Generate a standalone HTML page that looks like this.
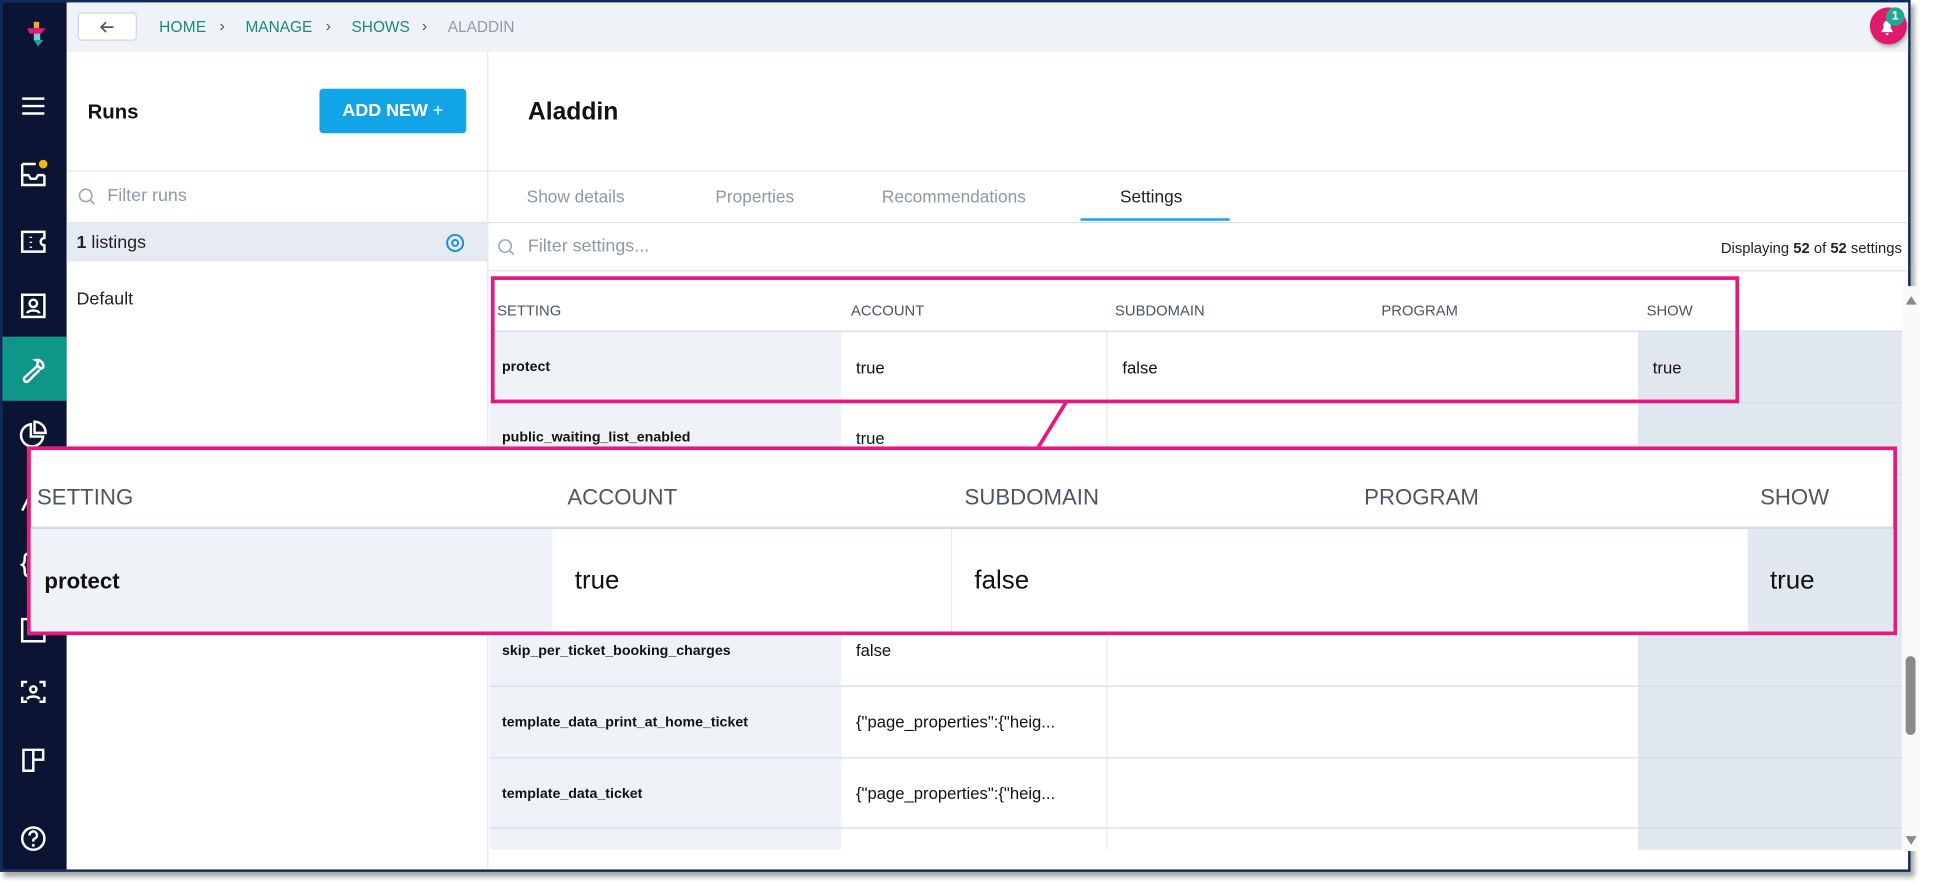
<!DOCTYPE html>
<html><head><meta charset="utf-8">
<style>
html,body{margin:0;padding:0;width:1934px;height:883px;overflow:hidden;background:#fff;}
#w{position:absolute;left:0;top:0;width:1568px;height:716px;transform:scale(1.23342,1.23324);transform-origin:0 0;font-family:"Liberation Sans",sans-serif;color:#111;}
.a{position:absolute;}
.frame{left:0;top:0;width:1549px;height:707px;border:2px solid #0f2a5c;box-sizing:border-box;box-shadow:3px 4px 4px rgba(0,0,0,.35);background:#fff;}
.side{left:2px;top:2px;width:52px;height:703px;background:#0b1533;}
.ic{position:absolute;left:14px;width:26px;height:26px;}
.t{white-space:nowrap;}
.hd{font-size:12px;color:#4b5563;}
.cell{font-size:12px;}
.hl{border:3px solid #e8177f;box-sizing:border-box;}
</style></head><body><div id="w">
<div class="a frame"></div>
<div class="a" style="left:54px;top:2px;width:1493px;height:40px;background:#eff3f8"></div>
<div class="a" style="left:63px;top:10px;width:48px;height:23px;background:#fff;border:1px solid #cfd6e0;border-radius:3px;box-sizing:border-box"></div>
<svg class="a" style="left:79px;top:14px" width="16" height="16" viewBox="0 0 16 16"><path d="M13 8H3M7 4L3 8l4 4" stroke="#555" stroke-width="1.4" fill="none"/></svg>
<div class="a t" style="left:129px;top:15px;font-size:12.5px;color:#158a7c;letter-spacing:.2px">HOME</div>
<div class="a t" style="left:178px;top:13px;font-size:13px;color:#555">›</div>
<div class="a t" style="left:199px;top:15px;font-size:12.5px;color:#158a7c">MANAGE</div>
<div class="a t" style="left:264px;top:13px;font-size:13px;color:#555">›</div>
<div class="a t" style="left:285px;top:15px;font-size:12.5px;color:#158a7c">SHOWS</div>
<div class="a t" style="left:342px;top:13px;font-size:13px;color:#555">›</div>
<div class="a t" style="left:363px;top:15px;font-size:12.5px;color:#8f9aa8">ALADDIN</div>
<div class="a" style="left:1516px;top:6px;width:30px;height:30px;border-radius:50%;background:#e0196f;box-shadow:1px 2px 3px rgba(0,0,0,.3)"></div>
<svg class="a" style="left:1522px;top:14px" width="16" height="16" viewBox="0 0 16 16"><path d="M3 12h10l-2-3V6a3 3 0 0 0-6 0v3z M7 13h2v1.5h-2z" fill="#fff"/></svg>
<div class="a" style="left:1529px;top:6px;width:15px;height:15px;border-radius:50%;background:#22a892;color:#fff;font-size:10px;font-weight:bold;text-align:center;line-height:15px">1</div>
<div class="a side"></div>
<svg class="ic" style="top:16px;left:17px" width="20" height="30" viewBox="0 0 20 30"><path d="M7 2h5v6H7z" fill="#f5a623"/><path d="M1 8h6v5H3z" fill="#e8177f"/><path d="M7 8h11l-4 5H7z" fill="#e8177f"/><path d="M7 13h6v6H7z" fill="#7ccbd6"/><path d="M7 19h9l-5 6z" fill="#1aa58f"/></svg>
<svg class="ic" style="top:73px" viewBox="0 0 26 26"><path d="M4 7h18M4 13h18M4 19h18" stroke="#fff" stroke-width="2"/></svg>
<svg class="ic" style="top:128px" viewBox="0 0 26 26"><path d="M4 5h11M4 5v17h18V14M4 14h5l2 3h4l2-3h5" stroke="#fff" stroke-width="2" fill="none"/><circle cx="21" cy="5" r="3.5" fill="#f5b50f"/></svg>
<svg class="ic" style="top:183px" viewBox="0 0 26 26"><path d="M4 5h18v5a3 3 0 0 0 0 6v5H4z" stroke="#fff" stroke-width="2" fill="none"/><path d="M11 9v1M11 13v1M11 17v1" stroke="#fff" stroke-width="2"/></svg>
<svg class="ic" style="top:235px" viewBox="0 0 26 26"><rect x="4" y="4" width="18" height="18" stroke="#fff" stroke-width="2" fill="none"/><circle cx="13" cy="11" r="3" stroke="#fff" stroke-width="2" fill="none"/><path d="M8 19c1-3 9-3 10 0" stroke="#fff" stroke-width="2" fill="none"/></svg>
<div class="a" style="left:2px;top:273px;width:52px;height:52px;background:#0e9688"></div>
<svg class="ic" style="top:287px" viewBox="0 0 26 26"><path d="M15 5a5 5 0 0 1 6 6l-2 1-3-3 1-3zM16 10L6 19a2 2 0 1 0 3 3l9-9" stroke="#fff" stroke-width="2" fill="none"/></svg>
<svg class="ic" style="top:339px" viewBox="0 0 26 26"><path d="M11 5a9 9 0 1 0 10 10H11z" stroke="#fff" stroke-width="2" fill="none"/><path d="M14 3a9 9 0 0 1 9 9h-9z" stroke="#fff" stroke-width="2" fill="none"/></svg>
<svg class="ic" style="top:392px" viewBox="0 0 26 26"><path d="M13 4L4 22M13 4l9 18" stroke="#fff" stroke-width="2" fill="none"/></svg>
<svg class="ic" style="top:445px" viewBox="0 0 26 26"><path d="M9 4c-3 0-3 2-3 5s-2 4-2 4 2 1 2 4 0 5 3 5M17 4c3 0 3 2 3 5s2 4 2 4-2 1-2 4 0 5-3 5" stroke="#fff" stroke-width="2" fill="none"/></svg>
<svg class="ic" style="top:498px" viewBox="0 0 26 26"><rect x="4" y="4" width="18" height="18" stroke="#fff" stroke-width="2" fill="none"/></svg>
<svg class="ic" style="top:548px" viewBox="0 0 26 26"><path d="M4 9V5h4M18 5h4v4M4 17v4h4M18 21h4v-4" stroke="#fff" stroke-width="2" fill="none"/><circle cx="13" cy="11" r="2.5" stroke="#fff" stroke-width="2" fill="none"/><path d="M8 19c1-3 9-3 10 0" stroke="#fff" stroke-width="2" fill="none"/></svg>
<svg class="ic" style="top:603px" viewBox="0 0 26 26"><path d="M5 5h16v8h-8v9H5zM13 5v8" stroke="#fff" stroke-width="2" fill="none"/></svg>
<svg class="ic" style="top:667px" viewBox="0 0 26 26"><circle cx="13" cy="13" r="9" stroke="#fff" stroke-width="2" fill="none"/><path d="M10 10.5a3 3 0 1 1 4 2.5c-1 .5-1 1-1 2.5" stroke="#fff" stroke-width="2" fill="none"/><circle cx="13" cy="18.5" r="1.2" fill="#fff"/></svg>
<div class="a t" style="left:71px;top:82px;font-size:16.5px;font-weight:bold;color:#111">Runs</div>
<div class="a t" style="left:259px;top:72px;width:119px;height:36px;background:#12a5e6;border-radius:3px;color:#fff;font-size:14.5px;font-weight:bold;line-height:36px;text-align:center">ADD NEW <span style="font-weight:normal">+</span></div>
<div class="a" style="left:54px;top:138px;width:1493px;height:1px;background:#e3e7ed"></div>
<svg class="a" style="left:63px;top:152px" width="15" height="15" viewBox="0 0 15 15"><circle cx="6.5" cy="6.5" r="5" stroke="#9aa5b3" stroke-width="1.3" fill="none"/><path d="M10 10l3.5 3.5" stroke="#9aa5b3" stroke-width="1.3"/></svg>
<div class="a t" style="left:87px;top:151px;font-size:14.5px;color:#8e98a6">Filter runs</div>
<div class="a" style="left:54px;top:180px;width:341px;height:32px;background:#e6ebf3;border-top:1px solid #dde3eb;box-sizing:border-box"></div>
<div class="a t" style="left:62px;top:189px;font-size:14.5px;color:#222"><b>1</b> listings</div>
<svg class="a" style="left:361px;top:189px" width="16" height="16" viewBox="0 0 16 16"><circle cx="8" cy="8" r="6.5" stroke="#1f8fd0" stroke-width="1.6" fill="none"/><circle cx="8" cy="8" r="2.4" stroke="#1f8fd0" stroke-width="1.6" fill="none"/></svg>
<div class="a t" style="left:62px;top:235px;font-size:14.5px;color:#222">Default</div>
<div class="a" style="left:395px;top:42px;width:1px;height:663px;background:#e3e7ed"></div>
<div class="a t" style="left:428px;top:80px;font-size:20px;font-weight:bold;color:#111">Aladdin</div>
<div class="a t" style="left:427px;top:151px;font-size:14px;color:#8e98a6">Show details</div>
<div class="a t" style="left:580px;top:151px;font-size:14px;color:#8e98a6">Properties</div>
<div class="a t" style="left:715px;top:151px;font-size:14px;color:#8e98a6">Recommendations</div>
<div class="a t" style="left:908px;top:151px;font-size:14px;color:#222">Settings</div>
<div class="a" style="left:876px;top:177px;width:121px;height:2px;background:#12a5e6"></div>
<div class="a" style="left:396px;top:180px;width:1151px;height:1px;background:#dfe4ea"></div>
<svg class="a" style="left:403px;top:193px" width="15" height="15" viewBox="0 0 15 15"><circle cx="6.5" cy="6.5" r="5" stroke="#9aa5b3" stroke-width="1.3" fill="none"/><path d="M10 10l3.5 3.5" stroke="#9aa5b3" stroke-width="1.3"/></svg>
<div class="a t" style="left:428px;top:192px;font-size:14.5px;color:#8e98a6">Filter settings...</div>
<div class="a t" style="right:26px;top:194px;font-size:12px;color:#222">Displaying <b>52</b> of <b>52</b> settings</div>
<div class="a" style="left:396px;top:219px;width:1151px;height:1px;background:#dfe4ea"></div>
<div class="a" style="left:1328px;top:268px;width:214px;height:421px;background:#e1e7ef"></div>
<div class="a" style="left:397px;top:268px;width:285px;height:421px;background:#eff3f8"></div>
<div class="a" style="left:897px;top:268px;width:1px;height:421px;background:#e6eaf0"></div>
<div class="a" style="left:397px;top:268px;width:1145px;height:1px;background:#d4dbe5"></div>
<div class="a" style="left:397px;top:326px;width:1145px;height:1px;background:#d4dbe5"></div>
<div class="a" style="left:397px;top:384px;width:1145px;height:1px;background:#d4dbe5"></div>
<div class="a" style="left:397px;top:556px;width:1145px;height:1px;background:#d4dbe5"></div>
<div class="a" style="left:397px;top:614px;width:1145px;height:1px;background:#d4dbe5"></div>
<div class="a" style="left:397px;top:671px;width:1145px;height:1px;background:#d4dbe5"></div>
<div class="a t hd" style="left:403px;top:245px">SETTING</div>
<div class="a t hd" style="left:690px;top:245px">ACCOUNT</div>
<div class="a t hd" style="left:904px;top:245px">SUBDOMAIN</div>
<div class="a t hd" style="left:1120px;top:245px">PROGRAM</div>
<div class="a t hd" style="left:1335px;top:245px">SHOW</div>
<div class="a t" style="left:407px;top:292px;font-size:11.5px;font-weight:bold">protect</div>
<div class="a t cell" style="left:694px;top:291px;font-size:13.5px">true</div>
<div class="a t cell" style="left:910px;top:291px;font-size:13.5px">false</div>
<div class="a t cell" style="left:1340px;top:291px;font-size:13.5px">true</div>
<div class="a t" style="left:407px;top:349px;font-size:11.5px;font-weight:bold">public_waiting_list_enabled</div>
<div class="a t cell" style="left:694px;top:348px;font-size:13.5px">true</div>
<div class="a t" style="left:407px;top:522px;font-size:11.5px;font-weight:bold">skip_per_ticket_booking_charges</div>
<div class="a t cell" style="left:694px;top:520px;font-size:13.5px">false</div>
<div class="a t" style="left:407px;top:580px;font-size:11.5px;font-weight:bold">template_data_print_at_home_ticket</div>
<div class="a t cell" style="left:694px;top:578px;font-size:13.5px">{"page_properties":{"heig...</div>
<div class="a t" style="left:407px;top:638px;font-size:11.5px;font-weight:bold">template_data_ticket</div>
<div class="a t cell" style="left:694px;top:636px;font-size:13.5px">{"page_properties":{"heig...</div>
<div class="a" style="left:1542px;top:232px;width:14px;height:458px;background:#fafafa"></div>
<svg class="a" style="left:1544px;top:238px" width="11" height="10"><path d="M1 9L5.5 2 10 9z" fill="#8a8a8a"/></svg>
<div class="a" style="left:1545px;top:532px;width:8px;height:64px;border-radius:4px;background:#8a8a8a"></div>
<svg class="a" style="left:1544px;top:677px" width="11" height="10"><path d="M1 1L5.5 8 10 1z" fill="#8a8a8a"/></svg>
<div class="a hl" style="left:398px;top:224px;width:1012px;height:103px"></div>
<svg class="a" style="left:830px;top:322px" width="40" height="45"><path d="M35 3L11 42" stroke="#e8177f" stroke-width="3"/></svg>
<div class="a hl" style="left:22px;top:362px;width:1516px;height:153px;background:#fff"></div>
<div class="a" style="left:25px;top:428px;width:1510px;height:84px;background:#fff"></div>
<div class="a" style="left:25px;top:428px;width:423px;height:84px;background:#eff3f8"></div>
<div class="a" style="left:1417px;top:428px;width:118px;height:84px;background:#e1e7ef"></div>
<div class="a" style="left:771px;top:428px;width:1px;height:84px;background:#e6eaf0"></div>
<div class="a" style="left:25px;top:427px;width:1510px;height:2px;background:#d4dbe5"></div>
<div class="a t" style="left:30px;top:393px;font-size:18px;color:#4b5563">SETTING</div>
<div class="a t" style="left:460px;top:393px;font-size:18px;color:#4b5563">ACCOUNT</div>
<div class="a t" style="left:782px;top:393px;font-size:18px;color:#4b5563">SUBDOMAIN</div>
<div class="a t" style="left:1106px;top:393px;font-size:18px;color:#4b5563">PROGRAM</div>
<div class="a t" style="left:1427px;top:393px;font-size:18px;color:#4b5563">SHOW</div>
<div class="a t" style="left:36px;top:461px;font-size:18px;font-weight:bold">protect</div>
<div class="a t" style="left:466px;top:459px;font-size:21px">true</div>
<div class="a t" style="left:790px;top:459px;font-size:21px">false</div>
<div class="a t" style="left:1435px;top:459px;font-size:21px">true</div>
</div></body></html>
